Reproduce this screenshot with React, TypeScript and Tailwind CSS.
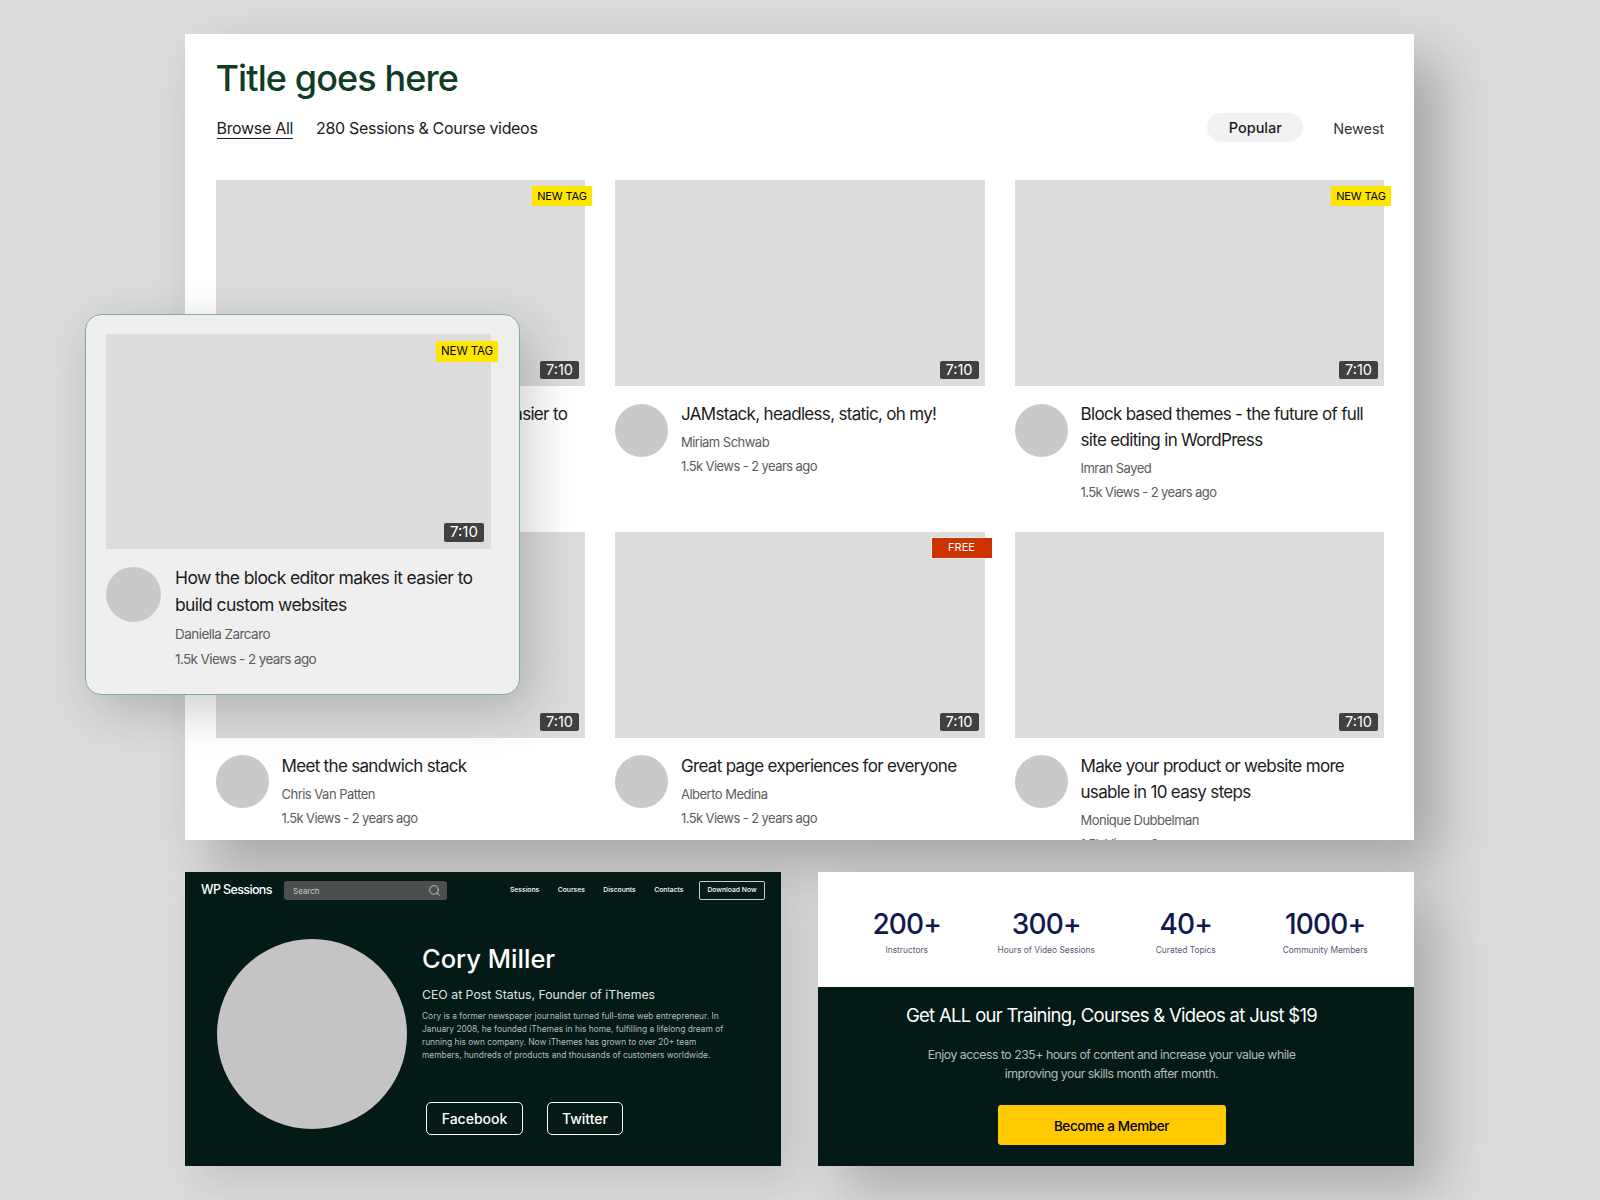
import React from 'react';
import { Search } from 'lucide-react';

interface Session {
  title: string;
  author: string;
  tag?: 'new' | 'free';
}

const sessions: Session[] = [
  { title: 'How the block editor makes it easier to build custom websites', author: 'Daniella Zarcaro', tag: 'new' },
  { title: 'JAMstack, headless, static, oh my!', author: 'Miriam Schwab' },
  { title: 'Block based themes - the future of full site editing in WordPress', author: 'Imran Sayed', tag: 'new' },
  { title: 'Meet the sandwich stack', author: 'Chris Van Patten' },
  { title: 'Great page experiences for everyone', author: 'Alberto Medina', tag: 'free' },
  { title: 'Make your product or website more usable in 10 easy steps', author: 'Monique Dubbelman' },
];

const stats = [
  { value: '200+', label: 'Instructors' },
  { value: '300+', label: 'Hours of Video Sessions' },
  { value: '40+', label: 'Curated Topics' },
  { value: '1000+', label: 'Community Members' },
];

const SessionCard: React.FC<{ session: Session }> = ({ session }) => (
  <div>
    <div className="relative h-[206px] bg-[#dcdcdc] border border-[#ead9c6]">
      {session.tag === 'new' && (
        <span className="absolute top-[5px] -right-[8px] w-[60px] h-[20px] bg-[#ffe600] text-black text-[11px] tracking-[-0.01em] flex items-center justify-center">NEW TAG</span>
      )}
      {session.tag === 'free' && (
        <span className="absolute top-[5px] -right-[8px] w-[60px] h-[20px] bg-[#cc3300] text-white text-[11px] flex items-center justify-center shadow-[0_0_0_1px_rgba(255,255,255,0.45)]">FREE</span>
      )}
      <span className="absolute bottom-[6px] right-[5px] w-[39px] h-[18px] rounded-[2px] bg-[#404040] text-white text-[14.5px] flex items-center justify-center">7:10</span>
    </div>
    <div className="flex gap-[13px] mt-[17.5px]">
      <div className="w-[53px] h-[53px] rounded-full bg-[#c9c9c9] shrink-0" />
      <div className="-mt-[2.5px]">
        <h3 className="text-[17px] leading-[26px] text-[#1c1c1c] tracking-[-0.04em]">{session.title}</h3>
        <p className="text-[13px] leading-[20px] mt-[5px] text-[#5c5c5c] tracking-[-0.04em]">{session.author}</p>
        <p className="text-[13px] leading-[20px] mt-[4px] text-[#5c5c5c] tracking-[-0.045em]">1.5k Views - 2 years ago</p>
      </div>
    </div>
  </div>
);

const HoverCard: React.FC = () => (
  <div className="absolute left-[85px] top-[314px] w-[435px] h-[381px] pl-[20px] pr-[19px] py-[19px] rounded-[16px] bg-[#efefef] border border-[#7fae9f] shadow-[10px_15px_50px_rgba(0,0,0,0.2)]">
    <div className="relative w-[385px] h-[215px] bg-[#dcdcdc] border border-[#ead9c6]">
      <span className="absolute top-[6px] -right-[8px] w-[62px] h-[21px] bg-[#ffe600] text-black text-[11.5px] tracking-[-0.01em] flex items-center justify-center">NEW TAG</span>
      <span className="absolute bottom-[6px] right-[6px] w-[40px] h-[19px] rounded-[2px] bg-[#404040] text-white text-[15px] flex items-center justify-center">7:10</span>
    </div>
    <div className="flex gap-[14px] mt-[18px]">
      <div className="w-[55px] h-[55px] rounded-full bg-[#c9c9c9] shrink-0" />
      <div className="-mt-[3px]">
        <h3 className="text-[17.5px] leading-[27px] text-[#1c1c1c] tracking-[-0.035em]">How the block editor makes it easier to build custom websites</h3>
        <p className="text-[13.5px] leading-[20px] mt-[6px] text-[#5c5c5c] tracking-[-0.04em]">Daniella Zarcaro</p>
        <p className="text-[13.5px] leading-[20px] mt-[5px] text-[#5c5c5c] tracking-[-0.045em]">1.5k Views - 2 years ago</p>
      </div>
    </div>
  </div>
);

const ProfilePanel: React.FC = () => (
  <div className="w-[596px] h-[294px] bg-[#031a17] text-white shadow-[15px_15px_40px_rgba(0,0,0,0.12)] px-[16px] pt-[9px]">
    <div className="flex items-center h-[19px]">
      <span className="text-[12.5px] font-medium tracking-[-0.05em] w-[83px]">WP Sessions</span>
      <div className="w-[163px] h-[19px] rounded-[3px] bg-[#4b4f4e] flex items-center justify-between pl-[9px] pr-[6px]">
        <span className="text-[8px] text-[#c4c7c6]">Search</span>
        <Search size={13} strokeWidth={1.5} className="text-[#d5d7d6]" />
      </div>
      <nav className="ml-auto flex items-center gap-[18.5px] text-[6.8px] font-medium">
        <span>Sessions</span>
        <span>Courses</span>
        <span>Discounts</span>
        <span>Contacts</span>
        <span className="w-[66px] h-[19px] ml-[-3px] border border-[#c8cccb] rounded-[2px] flex items-center justify-center">Download Now</span>
      </nav>
    </div>
    <div className="flex mt-[39px] pl-[16px]">
      <div className="w-[190px] h-[190px] rounded-full bg-[#c4c4c4] shrink-0" />
      <div className="ml-[15px]">
        <h2 className="text-[25.5px] leading-[32px] mt-[4px] font-medium">Cory Miller</h2>
        <p className="text-[12.3px] leading-[16px] mt-[12px] text-[#dfe3e2]">CEO at Post Status, Founder of iThemes</p>
        <p className="text-[8.4px] leading-[13px] mt-[7px] whitespace-nowrap text-[#b5bdbb]">
          Cory is a former newspaper journalist turned full-time web entrepreneur. In<br />
          January 2008, he founded iThemes in his home, fulfilling a lifelong dream of<br />
          running his own company. Now iThemes has grown to over 20+ team<br />
          members, hundreds of products and thousands of customers worldwide.
        </p>
        <div className="flex gap-[24px] mt-[40px] ml-[4px]">
          <span className="w-[97px] h-[33px] border border-white rounded-[5px] flex items-center justify-center text-[14px] font-medium">Facebook</span>
          <span className="w-[76px] h-[33px] border border-white rounded-[5px] flex items-center justify-center text-[14px] font-medium">Twitter</span>
        </div>
      </div>
    </div>
  </div>
);

const PricingPanel: React.FC = () => (
  <div className="w-[596px] h-[294px] flex flex-col shadow-[25px_25px_50px_rgba(0,0,0,0.22)]">
    <div className="h-[115px] bg-white grid grid-cols-4 px-[19px] pt-[34px]">
      {stats.map(s => (
        <div key={s.label} className="text-center">
          <div className="text-[28px] leading-[36px] font-medium text-[#12184f] tracking-[-0.03em]">{s.value}</div>
          <div className="text-[8.4px] leading-[12px] mt-[2px] text-[#565b75]">{s.label}</div>
        </div>
      ))}
    </div>
    <div className="flex-1 bg-[#031a17] flex flex-col items-center pr-[9px] pt-[14px]">
      <h2 className="text-[18.5px] leading-[28px] text-white tracking-[-0.037em]">Get ALL our Training, Courses &amp; Videos at Just $19</h2>
      <p className="text-[12.3px] leading-[19px] mt-[16px] text-[#b4bcb9] text-center w-[380px] tracking-[-0.04em]">Enjoy access to 235+ hours of content and increase your value while improving your skills month after month.</p>
      <div className="w-[228px] h-[40px] mt-[22px] pt-[2px] rounded-[3px] bg-[#ffcb00] text-black text-[13.5px] font-medium tracking-[-0.03em] flex items-center justify-center">Become a Member</div>
    </div>
  </div>
);

export default function App() {
  return (
    <div className="relative w-[1600px] h-[1200px] overflow-hidden bg-[#dcdcdc] font-['Inter',sans-serif] pl-[185px] pt-[34px]">
      <div className="w-[1229px] h-[806px] overflow-hidden bg-white shadow-[25px_25px_50px_rgba(0,0,0,0.25)] pl-[30.5px] pr-[30px]">
        <h1 className="text-[36px] leading-[44px] mt-[22px] font-medium text-[#0f3d24] tracking-[-0.025em]">Title goes here</h1>
        <div className="flex items-center justify-between mt-[13px] h-[30px]">
          <div className="flex items-center gap-[23px] text-[16px] text-[#1c1c1c] tracking-[-0.02em]">
            <span className="border-b border-[#1c1c1c] leading-[20px] ml-[1px]">Browse All</span>
            <span>280 Sessions &amp; Course videos</span>
          </div>
          <div className="flex items-center gap-[30px] text-[14.5px]">
            <span className="w-[96px] h-[29px] pt-[2px] -mt-[2px] rounded-full bg-[#f2f2f2] font-medium text-[#1c1c1c] flex items-center justify-center">Popular</span>
            <span className="text-[#333333] tracking-[-0.01em] mt-[1px]">Newest</span>
          </div>
        </div>
        <div className="grid grid-cols-3 gap-x-[30px] auto-rows-[351.5px] mt-[37px]">
          {sessions.map(s => <SessionCard key={s.title} session={s} />)}
        </div>
      </div>
      <div className="flex gap-[37px] mt-[32px]">
        <ProfilePanel />
        <PricingPanel />
      </div>
      <HoverCard />
    </div>
  );
}
